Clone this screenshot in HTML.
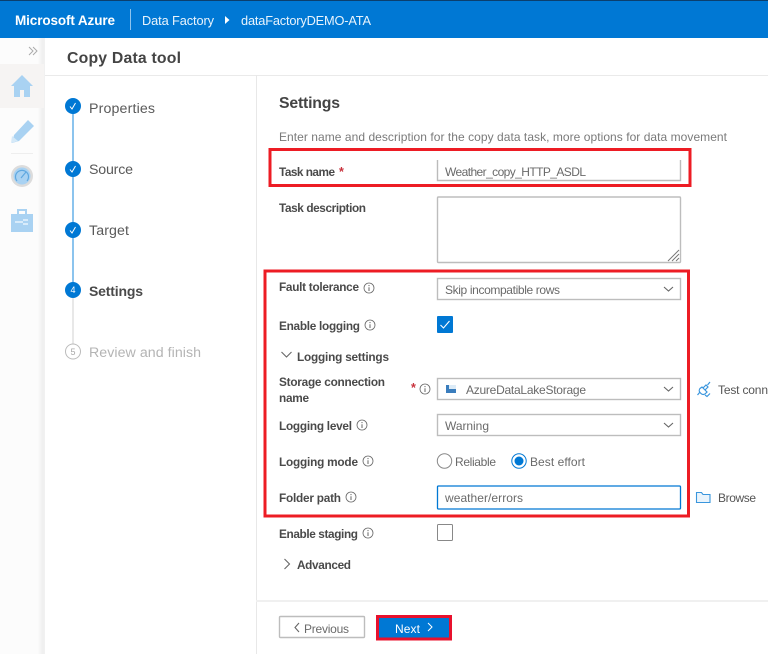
<!DOCTYPE html>
<html><head><meta charset="utf-8"><style>
html,body{margin:0;padding:0;background:#fff;width:768px;height:654px;overflow:hidden}
svg{display:block;font-family:"Liberation Sans",sans-serif;filter:blur(.25px)}
.l{font-size:11.8px;font-weight:bold;fill:#4a4a4a}
.v{font-size:12px;fill:#6a6a6a}
.s{font-size:14.2px;fill:#5a5a5a}
.i circle{fill:none;stroke:#666;stroke-width:.8}
.i path{stroke:#666;stroke-width:1;fill:none}
.box{fill:#fff;stroke:#bdbdbd;stroke-width:1.4}
.ch{fill:none;stroke:#666;stroke-width:1.1}
</style></head><body>
<svg width="768" height="654" viewBox="0 0 768 654" xmlns="http://www.w3.org/2000/svg">
<defs>
<g id="inf" class="i"><circle r="5"/><path d="M0 -.8V3M0 -3V-1.9"/></g>
<linearGradient id="sh" x1="0" x2="1"><stop offset="0" stop-color="#fbfbfb"/><stop offset=".7" stop-color="#efefef"/><stop offset="1" stop-color="#f2f2f2"/></linearGradient>
</defs>
<rect width="768" height="38" fill="#0078d4"/>
<rect width="768" height="1" fill="#0b3f6e"/>
<text x="15" y="25" font-size="13.500" font-weight="bold" fill="#fff" textLength="100">Microsoft Azure</text>
<rect x="130" y="9" width="1" height="21" fill="#8dc4ee"/>
<text x="142" y="25" font-size="12.800" fill="#e8f3fc" textLength="72">Data Factory</text>
<path d="M225 16l4.500 4-4.500 4z" fill="#fff"/>
<text x="241" y="25" font-size="12.800" fill="#e8f3fc" textLength="130">dataFactoryDEMO-ATA</text>

<rect y="38" width="44" height="616" fill="#fcfcfc"/>
<rect x="38" y="38" width="7" height="616" fill="url(#sh)"/>
<rect y="64" width="44" height="44" fill="#f6f4f3"/>
<path d="M29 47l4 4-4 4M33 47l4 4-4 4" fill="none" stroke="#aaa" stroke-width="1"/>
<path d="M22 75L11 86h3v11h6v-7h4v7h6V86h3z" fill="#a9d2f2"/>
<path d="M28 120l6 6-15 15-7 2 2-8z" fill="#a9d2f2"/>
<path d="M12 136l-1 7 7-2z" fill="#d5e9f8"/>
<rect x="11" y="153" width="22" height="1" fill="#eee"/>
<circle cx="22" cy="176" r="11" fill="#dcdcdc"/>
<circle cx="22" cy="176" r="8.500" fill="#a9d2f2"/>
<path d="M17 181a6.500 6.500 0 1 1 10 0M21 178l5-6" fill="none" stroke="#5fa8e0" stroke-width="1.200"/>
<path d="M18 214v-4h8v4" fill="none" stroke="#a9d2f2" stroke-width="2"/>
<rect x="11" y="214" width="22" height="18" fill="#a9d2f2"/>
<path d="M15 222h8M23 220h5M23 224h5" stroke="#e8f3fc" stroke-width="1.500"/>

<text x="67" y="63" font-size="15.800" font-weight="bold" fill="#444" textLength="114">Copy Data tool</text>
<rect x="45" y="75" width="723" height="1" fill="#eaeaea"/>
<rect x="256" y="75" width="1" height="579" fill="#e8e8e8"/>

<rect x="72" y="110" width="2" height="180" fill="#8cc4ee"/>
<rect x="72" y="298" width="2" height="46" fill="#e8e8e8"/>
<g fill="#0078d4">
<circle cx="73" cy="106" r="8"/><circle cx="73" cy="169" r="8"/><circle cx="73" cy="230" r="8"/><circle cx="73" cy="290" r="8"/>
</g>
<g fill="none" stroke="#fff" stroke-width="1">
<path d="M70 106.500l2 2.500 3.500-6"/><path d="M70 169.500l2 2.500 3.500-6"/><path d="M70 230.500l2 2.500 3.500-6"/>
</g>
<text x="73" y="293" font-size="9" fill="#fff" text-anchor="middle">4</text>
<circle cx="73" cy="351.500" r="7.500" fill="#fff" stroke="#bbb"/>
<text x="73" y="355" font-size="9" fill="#aaa" text-anchor="middle">5</text>
<text x="89" y="113" class="s" textLength="66">Properties</text>
<text x="89" y="174" class="s" textLength="44">Source</text>
<text x="89" y="235" class="s" textLength="40">Target</text>
<text x="89" y="296" font-size="14" font-weight="bold" fill="#4a4a4a" textLength="54">Settings</text>
<text x="89" y="357" font-size="14.200" fill="#b4b4b4" textLength="112">Review and finish</text>

<text x="279" y="108" font-size="15.800" font-weight="bold" fill="#444" textLength="61">Settings</text>
<text x="279" y="141" font-size="12" fill="#7a7a7a" textLength="448">Enter name and description for the copy data task, more options for data movement</text>

<text x="279" y="176" class="l" textLength="56">Task name</text>
<text x="339" y="176" font-size="12.500" font-weight="bold" fill="#c8323c">*</text>
<path d="M437.500 160v20.500h243V160" fill="none" stroke="#bbb" stroke-width="1.400"/>
<text x="445" y="176" class="v" textLength="141">Weather_copy_HTTP_ASDL</text>

<text x="279" y="212" class="l" textLength="87">Task description</text>
<rect x="437.500" y="197" width="243" height="65.500" class="box" rx="1"/>
<path d="M668 261l11-11M672 261l7-7M676 261l3-3" stroke="#777" stroke-width="1" fill="none"/>

<text x="279" y="291" class="l" textLength="80">Fault tolerance</text>
<use href="#inf" x="369" y="288"/>
<rect x="437.500" y="278.500" width="243" height="21" class="box"/>
<text x="445" y="294" class="v" textLength="115">Skip incompatible rows</text>
<path d="M664 287l4.500 4 4.500-4" class="ch"/>

<text x="279" y="330" class="l" textLength="81">Enable logging</text>
<use href="#inf" x="370" y="325"/>
<rect x="437" y="316" width="16" height="17" fill="#0078d4" rx="1"/>
<path d="M440.500 325l3 3 6-7" fill="none" stroke="#fff" stroke-width="1.100"/>

<path d="M281.500 352l5 5 5-5" class="ch"/>
<text x="297" y="361" class="l" textLength="92">Logging settings</text>

<text x="279" y="386" class="l" textLength="106">Storage connection</text>
<text x="279" y="402" class="l" textLength="30">name</text>
<text x="411" y="392" font-size="12.500" font-weight="bold" fill="#c8323c">*</text>
<use href="#inf" x="425" y="389"/>
<rect x="437.500" y="378.500" width="243" height="21" class="box"/>
<rect x="446" y="385" width="10" height="8" fill="#3a7dbd"/>
<rect x="449" y="385" width="7" height="4" fill="#dcebf7"/>
<text x="466" y="394" class="v" textLength="120">AzureDataLakeStorage</text>
<path d="M664 387l4.500 4 4.500-4" class="ch" stroke="#999"/>
<g fill="none" stroke="#3a96dd" stroke-width="1.200">
<path d="M700 392l-2.500 3M710 382l-2.500 3"/>
<path d="M702 387l5 5-1.500 1.500a3 3 0 0 1-4.500 0l-1-1a3 3 0 0 1 0-4z"/>
<path d="M703 388l3-3 2 2-3 3"/>
<path d="M705 395l2 1.500 3-3"/>
</g>
<text x="718" y="394" class="v" textLength="50" style="fill:#555">Test conn</text>

<text x="279" y="430" class="l" textLength="73">Logging level</text>
<use href="#inf" x="362" y="425"/>
<rect x="437.500" y="414.500" width="243" height="21" class="box"/>
<text x="445" y="430" class="v" textLength="44">Warning</text>
<path d="M664 423l4.500 4 4.500-4" class="ch"/>

<text x="279" y="466" class="l" textLength="79">Logging mode</text>
<use href="#inf" x="368" y="461"/>
<circle cx="444.500" cy="461" r="7.200" fill="#fff" stroke="#888"/>
<text x="455" y="466" class="v" textLength="41">Reliable</text>
<circle cx="519" cy="461" r="7.200" fill="#fff" stroke="#0078d4"/>
<circle cx="519" cy="461" r="4.500" fill="#0078d4"/>
<text x="530" y="466" class="v" textLength="55">Best effort</text>

<text x="279" y="502" class="l" textLength="62">Folder path</text>
<use href="#inf" x="351" y="497"/>
<rect x="437.500" y="486" width="243" height="23" fill="#fff" stroke="#0078d4" stroke-width="1.300" rx="1"/>
<text x="445" y="502" class="v" textLength="78">weather/errors</text>
<path d="M696.500 502.500v-10h5l1.500 2h7v8z" fill="#eaf4fc" stroke="#3a96dd" stroke-width="1.100"/>
<text x="718" y="502" class="v" textLength="38" style="fill:#555">Browse</text>

<text x="279" y="538" class="l" textLength="79">Enable staging</text>
<use href="#inf" x="368" y="533"/>
<rect x="437.500" y="524.500" width="15" height="16" fill="#fff" stroke="#888" rx="1"/>

<path d="M284.500 559l5 5-5 5" class="ch"/>
<text x="297" y="569" class="l" textLength="54">Advanced</text>

<rect x="256" y="600" width="512" height="2" fill="#f0f0f0"/>
<rect x="279.500" y="616.500" width="85" height="21" class="box" rx="1"/>
<path d="M299 623l-4 4.500 4 4.500" class="ch"/>
<text x="304" y="633" class="v" textLength="45">Previous</text>
<rect x="377.500" y="616.500" width="73" height="22.500" fill="#0078d4" stroke="#e8112d" stroke-width="3"/>
<text x="395" y="633" font-size="12" fill="#fff" textLength="25">Next</text>
<path d="M428 623l4 4-4 4" fill="none" stroke="#fff" stroke-width="1"/>

<rect x="270" y="149.500" width="420" height="36" fill="none" stroke="#ed1c24" stroke-width="3"/>
<rect x="265" y="271" width="423.500" height="245" fill="none" stroke="#ed1c24" stroke-width="3"/>
</svg>
</body></html>
